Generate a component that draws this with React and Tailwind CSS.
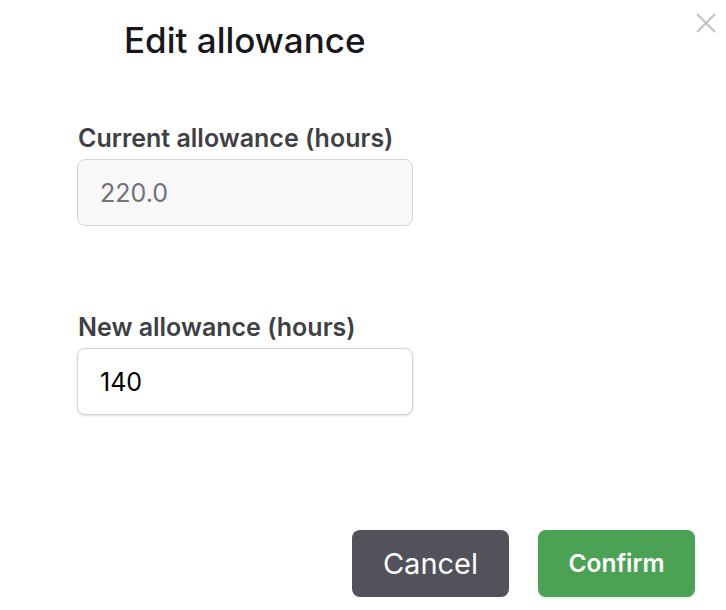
import { X } from "lucide-react";

export default function App() {
  return (
    <div className="relative w-[726px] h-[610px] bg-white overflow-hidden font-['Inter','Liberation_Sans',sans-serif]">
      {/* close */}
      <button className="absolute top-[6px] left-[689px] text-[#c2c2c6]">
        <X className="w-[34px] h-[34px]" strokeWidth={1.4} />
      </button>

      <div className="flex flex-col pt-[18px]">
        <h1 className="pl-[124px] text-[35px] leading-[44px] font-medium text-[#18181b]">
          Edit allowance
        </h1>

        <div className="flex flex-col pl-[77px] mt-[62px]">
          <label className="pl-px text-[25px] leading-[28px] font-semibold text-[#3f3f46]">
            Current allowance (hours)
          </label>
          <input
            type="text"
            value="220.0"
            readOnly
            className="mt-[7px] w-[336px] h-[67px] px-[22px] text-[25px] text-[#71717a] bg-[#f8f8f8] border border-[#d4d4d8] rounded-[8px] outline-none"
          />

          <label className="mt-[87px] pl-px text-[25px] leading-[28px] font-semibold text-[#3f3f46]">
            New allowance (hours)
          </label>
          <input
            type="text"
            defaultValue="140"
            className="mt-[7px] w-[336px] h-[67px] px-[22px] text-[25px] text-black bg-white border border-[#d4d4d8] rounded-[8px] shadow-sm outline-none"
          />
        </div>

        <div className="flex justify-end gap-[29px] pr-[31px] mt-[115px]">
          <button className="w-[157px] h-[67px] rounded-[8px] bg-[#52525b] text-white text-[29px]">
            Cancel
          </button>
          <button className="w-[157px] h-[67px] rounded-[8px] bg-[#4ca254] text-white text-[24.5px] font-semibold shadow-sm">
            Confirm
          </button>
        </div>
      </div>
    </div>
  );
}
